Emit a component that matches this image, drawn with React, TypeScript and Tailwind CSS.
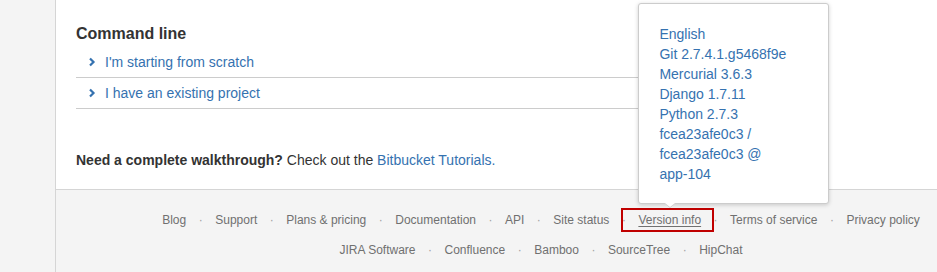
const font = { fontFamily: '"Liberation Sans", Arial, sans-serif' };

const versionLines = [
  "English",
  "Git 2.7.4.1.g5468f9e",
  "Mercurial 3.6.3",
  "Django 1.7.11",
  "Python 2.7.3",
  "fcea23afe0c3 /",
  "fcea23afe0c3 @",
  "app-104",
];

const footerTop = [
  "Blog",
  "Support",
  "Plans & pricing",
  "Documentation",
  "API",
  "Site status",
  "Version info",
  "Terms of service",
  "Privacy policy",
];

const footerBottom = ["JIRA Software", "Confluence", "Bamboo", "SourceTree", "HipChat"];

function Chevron() {
  return (
    <svg width="8" height="10" viewBox="0 0 8 10" className="shrink-0">
      <polyline
        points="2,1.5 5.5,5 2,8.5"
        fill="none"
        stroke="#3572b0"
        strokeWidth="2.2"
      />
    </svg>
  );
}

function OptionRow({ label }: { label: string }) {
  return (
    <div className="flex h-[31px] items-center border-b border-[#cccccc]">
      <div className="flex w-[29px] justify-end pr-[9px]">
        <Chevron />
      </div>
      <a className="text-[14px] leading-5 text-[#3572b0]">{label}</a>
    </div>
  );
}

function VersionPopup() {
  return (
    <div className="absolute bottom-[calc(100%+1px)] left-0 z-10 w-[191px] rounded-[3px] border border-[#cccccc] bg-white pt-5 pb-[19px] pl-5 shadow-[0_1px_4px_rgba(0,0,0,0.18)]">
      {versionLines.map((line) => (
        <div className="text-[14px] leading-5 whitespace-nowrap text-[#3572b0]" key={line}>
          {line}
        </div>
      ))}
      <div className="absolute -bottom-[5px] left-[25px] h-0 w-0 border-x-[6px] border-t-[5px] border-x-transparent border-t-[#d0d0d0]" />
      <div className="absolute -bottom-[4px] left-[26px] h-0 w-0 border-x-[5px] border-t-[4px] border-x-transparent border-t-white" />
    </div>
  );
}

function FooterRow({ items }: { items: string[] }) {
  return (
    <div className="flex justify-center text-[12px] leading-[30px] whitespace-nowrap">
      {items.map((item, i) => (
        <span className="flex" key={item}>
          {i > 0 && <span className="mx-[12.5px] text-[#a0a0a0]">·</span>}
          {item === "Version info" ? (
            <span className="relative">
              <a className="text-[#707070] underline underline-offset-2">{item}</a>
              <span className="pointer-events-none absolute top-[3px] -right-[13px] bottom-[3px] -left-[17px] border-2 border-[#c00000]" />
              <VersionPopup />
            </span>
          ) : (
            <a className="text-[#707070]">{item}</a>
          )}
        </span>
      ))}
    </div>
  );
}

export default function App() {
  return (
    <div className="flex h-[272px] overflow-hidden bg-white text-[#333333]" style={font}>
      <aside className="w-[56px] shrink-0 border-r border-[#d5d5d5] bg-[#f4f4f4]" />
      <main className="flex min-w-0 flex-1 flex-col">
        <section className="px-5 pt-6 pb-[19px]">
          <div className="max-w-[700px]">
            <h2 className="mb-[3px] text-[16px] leading-5 font-bold text-[#333333]">
              Command line
            </h2>
            <OptionRow label="I'm starting from scratch" />
            <OptionRow label="I have an existing project" />
            <p className="mt-[41px] text-[14px] leading-5">
              <strong>Need a complete walkthrough?</strong> Check out the{" "}
              <a className="text-[#3572b0]">Bitbucket Tutorials.</a>
            </p>
          </div>
        </section>
        <footer className="flex-1 border-t border-[#d5d5d5] bg-[#f4f4f4] pt-[15px] pl-[89px]">
          <FooterRow items={footerTop} />
          <FooterRow items={footerBottom} />
        </footer>
      </main>
    </div>
  );
}
